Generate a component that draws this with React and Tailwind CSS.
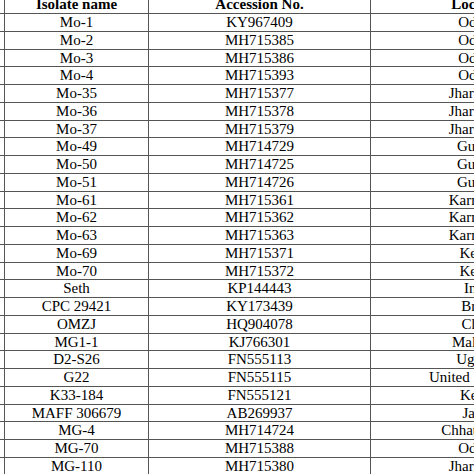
import React from "react";

const rows = [
  ["Mo-1", "KY967409", "Odisha"],
  ["Mo-2", "MH715385", "Odisha"],
  ["Mo-3", "MH715386", "Odisha"],
  ["Mo-4", "MH715393", "Odisha"],
  ["Mo-35", "MH715377", "Jharkhand"],
  ["Mo-36", "MH715378", "Jharkhand"],
  ["Mo-37", "MH715379", "Jharkhand"],
  ["Mo-49", "MH714729", "Gujarat"],
  ["Mo-50", "MH714725", "Gujarat"],
  ["Mo-51", "MH714726", "Gujarat"],
  ["Mo-61", "MH715361", "Karnataka"],
  ["Mo-62", "MH715362", "Karnataka"],
  ["Mo-63", "MH715363", "Karnataka"],
  ["Mo-69", "MH715371", "Kerala"],
  ["Mo-70", "MH715372", "Kerala"],
  ["Seth", "KP144443", "India"],
  ["CPC 29421", "KY173439", "Brazil"],
  ["OMZJ", "HQ904078", "China"],
  ["MG1-1", "KJ766301", "Malaysia"],
  ["D2-S26", "FN555113", "Uganda"],
  ["G22", "FN555115", "United Kingdom"],
  ["K33-184", "FN555121", "Kenya"],
  ["MAFF 306679", "AB269937", "Japan"],
  ["MG-4", "MH714724", "Chhattisgarh"],
  ["MG-70", "MH715388", "Odisha"],
  ["MG-110", "MH715380", "Jharkhand"],
];

function Row({ cells, bold }) {
  return (
    <div
      className={
        "flex h-[17.76px] border-b border-[#555] leading-[17px] " +
        (bold ? "font-bold" : "")
      }
    >
      <div className="w-[60px] shrink-0 border-r border-[#555]" />
      <div className="w-[144px] shrink-0 border-r border-[#555] text-center whitespace-nowrap">
        {cells[0]}
      </div>
      <div className="w-[222px] shrink-0 border-r border-[#555] text-center whitespace-nowrap">
        {cells[1]}
      </div>
      <div className="w-[218px] shrink-0 border-r border-[#555] text-center whitespace-nowrap">
        {cells[2]}
      </div>
    </div>
  );
}

export default function App() {
  return (
    <div className="w-[474px] h-[474px] overflow-hidden bg-white text-black">
      <div
        className="ml-[-55px] mt-[-3.76px] w-[644px] text-[15px]"
        style={{ fontFamily: '"Liberation Serif", "Times New Roman", serif' }}
      >
        <Row cells={["Isolate name", "Accession No.", "Location"]} bold />
        {rows.map((r, i) => (
          <Row key={i} cells={r} />
        ))}
      </div>
    </div>
  );
}
